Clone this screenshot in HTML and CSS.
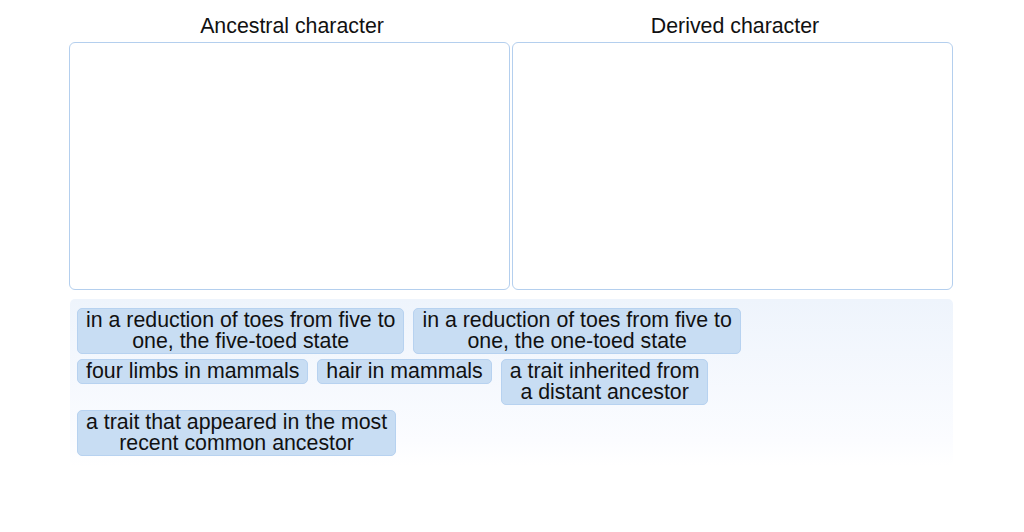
FILE: index.html
```html
<!DOCTYPE html>
<html>
<head>
<meta charset="utf-8">
<link rel="stylesheet" href="styles.css">
</head>
<body>
<div class="page">
  <div class="columns">
    <div class="column">
      <div class="heading">Ancestral character</div>
      <div class="dropzone"></div>
    </div>
    <div class="column">
      <div class="heading">Derived character</div>
      <div class="dropzone"></div>
    </div>
  </div>
  <div class="pool">
    <div class="chip">in a reduction of toes from five to<br>one, the five-toed state</div>
    <div class="chip">in a reduction of toes from five to<br>one, the one-toed state</div>
    <div class="chip">four limbs in mammals</div>
    <div class="chip">hair in mammals</div>
    <div class="chip">a trait inherited from<br>a distant ancestor</div>
    <div class="chip">a trait that appeared in the most<br>recent common ancestor</div>
  </div>
</div>
</body>
</html>
```

FILE: styles.css
```css
html, body {
  margin: 0;
  padding: 0;
  background: #ffffff;
}

body {
  font-family: "Liberation Sans", Arial, sans-serif;
  color: #111111;
}

.page {
  padding: 14px 0 0 69px;
  width: 884px;
}

.columns {
  display: flex;
  gap: 2px;
}

.column {
  flex: 1 1 0;
  display: flex;
  flex-direction: column;
}

.heading {
  font-size: 21.33px;
  line-height: 24px;
  height: 24px;
  padding-left: 5px;
  text-align: center;
  margin: 0 0 4px 0;
  color: #111111;
}

.dropzone {
  height: 246px;
  border: 1px solid #b4cfee;
  border-radius: 6px;
  background: #ffffff;
}

.pool {
  margin: 9px 0 0 1px;
  padding: 9px 7px 10px 7px;
  min-height: 150px;
  box-sizing: border-box;
  border-radius: 5px;
  background: linear-gradient(to bottom, #eef4fc 0%, #fbfcff 85%, #ffffff 100%);
  display: flex;
  flex-wrap: wrap;
  align-items: flex-start;
  align-content: flex-start;
  column-gap: 9px;
  row-gap: 5px;
}

.chip {
  background: #c8ddf3;
  border: 1px solid #b7d2f0;
  border-radius: 5px;
  padding: 1px 8px;
  font-size: 21.33px;
  line-height: 21px;
  text-align: center;
  white-space: nowrap;
  color: #111111;
}
```
